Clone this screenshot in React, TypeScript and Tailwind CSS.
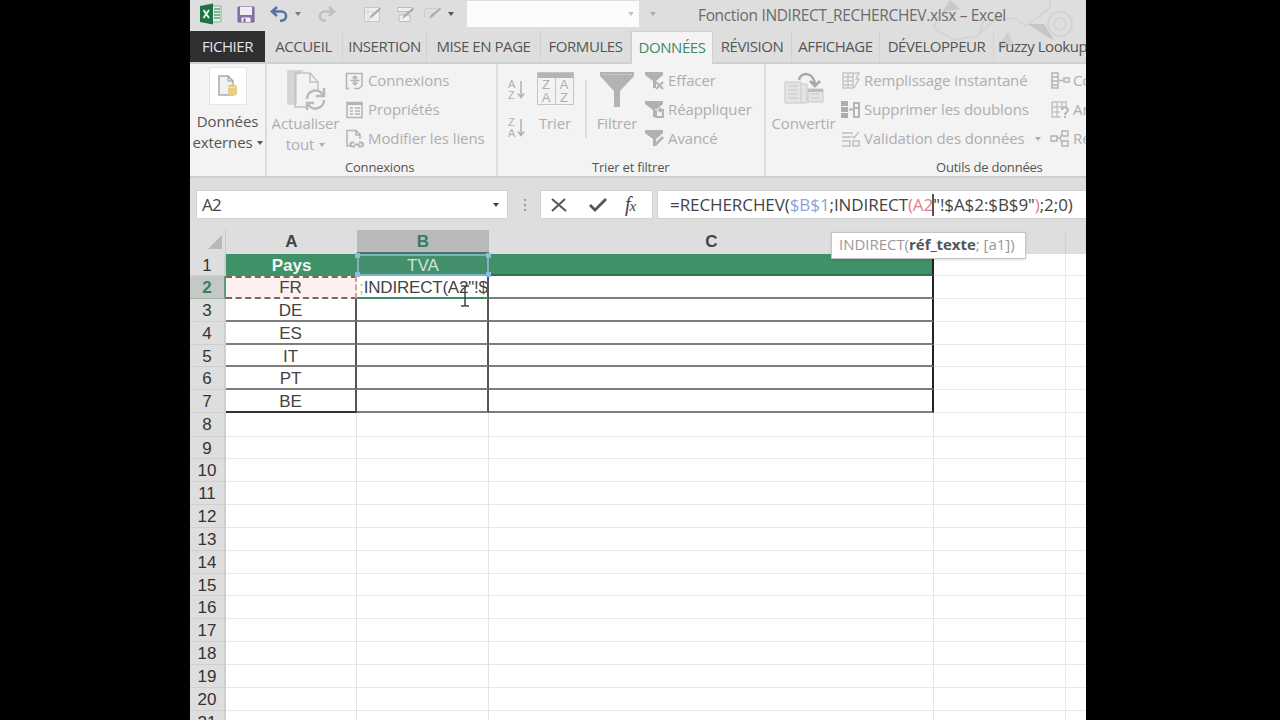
import type { ReactNode } from 'react';
import { clsx } from 'clsx';

interface Tab {
  label: string;
  className: string;
}

const tabs: Tab[] = [
  { label: 'ACCUEIL', className: 'w-[78px]' },
  { label: 'INSERTION', className: 'w-[84px]' },
  { label: 'MISE EN PAGE', className: 'w-[114px]' },
  { label: 'FORMULES', className: 'w-[90px]' },
  { label: 'DONNÉES', className: 'w-[82px]' },
  { label: 'RÉVISION', className: 'w-[79px]' },
  { label: 'AFFICHAGE', className: 'w-[88px]' },
  { label: 'DÉVELOPPEUR', className: 'w-[114px]' },
];

const countries = ['FR', 'DE', 'ES', 'IT', 'PT', 'BE'];

// Heights of the 21 visible rows, the zoom level makes them uneven
const rowHeights = [
  'h-[22px]', 'h-[23px]', 'h-[23px]', 'h-[23px]', 'h-[22px]', 'h-[23px]', 'h-[23px]',
  'h-[24px]', 'h-[22px]', 'h-[23px]', 'h-[23px]', 'h-[23px]', 'h-[23px]', 'h-[23px]',
  'h-[22px]', 'h-[23px]', 'h-[23px]', 'h-[23px]', 'h-[23px]', 'h-[23px]', 'h-[23px]',
];

function Caret({ className }: { className?: string }) {
  return (
    <svg viewBox="0 0 6 4" className={clsx('w-[6px] h-[4px] shrink-0', className)} fill="currentColor">
      <path d="M0 0h6L3 4z" />
    </svg>
  );
}

function ExcelIcon() {
  return (
    <svg width="22" height="22" viewBox="0 0 22 22">
      <path d="M12 3h9v16h-9z" fill="#e4efe8" stroke="#7fb496" />
      <path d="M14 6h6M14 9h6M14 12h6M14 15h6" stroke="#5d9e7b" strokeWidth="1.500" />
      <path d="M0 3l13-2.500v21L0 19z" fill="#1f7246" />
      <path d="M3.500 7l5.500 8M9 7l-5.500 8" stroke="#e8f3ec" strokeWidth="1.900" />
    </svg>
  );
}

function SaveIcon() {
  return (
    <svg width="18" height="17" viewBox="0 0 18 17">
      <path d="M1 1h16v15H1z" fill="#8b6fa5" stroke="#7d6196" />
      <path d="M3 1h12v8H3z" fill="#f1edf4" />
      <path d="M4.500 11.500h9V16h-9z" fill="#f1edf4" />
      <path d="M6.500 12.500h2V16h-2z" fill="#7d6196" />
    </svg>
  );
}

function UndoIcon({ redo }: { redo?: boolean }) {
  return (
    <svg width="19" height="16" viewBox="0 0 19 16" fill="none" stroke={redo ? '#b9b9b9' : '#5573a5'} strokeWidth="2.600" className={redo ? '-scale-x-100' : ''}>
      <path d="M7 1L2 5.500 7 10M2 5.500h9.500a4.600 4.600 0 0 1 0 9.200H10" />
    </svg>
  );
}

function EditTableIcon({ variant }: { variant: number }) {
  return (
    <svg width="19" height="18" viewBox="0 0 19 18" fill="none">
      {variant === 0 && <path d="M1.500 2.500h15v14h-15z" fill="#efefef" stroke="#c6c6c6" />}
      {variant === 0 && <path d="M5 3v13M2 7h14" stroke="#d6d6d6" />}
      {variant === 1 && <path d="M1.500 2.500h15v4h-15zM3 10h11v6.500H3z" fill="#efefef" stroke="#bcbcbc" />}
      {variant === 2 && <path d="M1.500 12V3.500h12" stroke="#c6c6c6" strokeDasharray="2 1" />}
      <path d="M6 14l2-4 9-7.500 1 1.500-8 7.500z" fill="#ababab" />
    </svg>
  );
}

function TitleBar() {
  return (
    <div className="flex h-[31px] shrink-0 items-center pb-[3px]">
      <div className="ml-[10px] w-[37px]"><ExcelIcon /></div>
      <div className="w-[33px]"><SaveIcon /></div>
      <div className="flex w-[47px] items-center gap-[6px] text-[#777]">
        <UndoIcon />
        <Caret />
      </div>
      <div className="w-[46px] opacity-80"><UndoIcon redo /></div>
      <div className="w-[33px]"><EditTableIcon variant={0} /></div>
      <div className="w-[27px]"><EditTableIcon variant={1} /></div>
      <div className="flex w-[44px] items-center gap-[6px] text-[#555]">
        <EditTableIcon variant={2} />
        <Caret />
      </div>
      <div className="flex h-[26px] w-[172px] items-center justify-end bg-[#fcfcfc] pr-[5px] text-[#c4c4c4]">
        <Caret />
      </div>
      <Caret className="ml-[11px] text-[#aaa]" />
      <span className="ml-[42px] mt-[3px] whitespace-nowrap text-[15.500px] tracking-[-0.350px] text-[#6b6b6b]">
        Fonction INDIRECT_RECHERCHEV.xlsx – Excel
      </span>
    </div>
  );
}

function TabBar() {
  return (
    <div className="flex h-[33px] shrink-0 border-b-2 border-[#d0d0d0] text-[15px] tracking-[-0.450px] text-[#555]">
      <div className="flex h-[31px] w-[75px] shrink-0 items-center justify-center bg-[#303030] text-[#e6e6e6]">FICHIER</div>
      {tabs.map(tab => (
        <div
          key={tab.label}
          className={clsx(
            'flex shrink-0 items-center justify-center whitespace-nowrap',
            tab.className,
            tab.label === 'DONNÉES' ? 'h-[33px] border-x border-t border-[#cfcfcf] bg-[#f4f4f4] pb-[2px] text-[#3f8a68]' : 'border-r border-[#d2d2d2]'
          )}
        >
          {tab.label}
        </div>
      ))}
      <div className="flex items-center whitespace-nowrap pl-[4px]">Fuzzy Lookup</div>
    </div>
  );
}

function SmallIcon({ children }: { children: ReactNode }) {
  return (
    <svg width="20" height="20" viewBox="0 0 20 20" fill="none" stroke="#b4b4b4" strokeWidth="1.500" className="shrink-0">
      {children}
    </svg>
  );
}

function Command({ icon, label, caret }: { icon: ReactNode; label: string; caret?: boolean }) {
  return (
    <div className="flex h-[29px] shrink-0 items-center gap-[3px] whitespace-nowrap">
      <SmallIcon>{icon}</SmallIcon>
      <span>{label}</span>
      {caret && <Caret className="ml-[7px]" />}
    </div>
  );
}

function GroupTitle({ children, className }: { children: ReactNode; className?: string }) {
  return (
    <div className={clsx('h-[16px] shrink-0 whitespace-nowrap text-[13px] leading-[16px] tracking-[-0.200px] text-[#555]', className)}>{children}</div>
  );
}

function SortIcon({ first, second }: { first: string; second: string }) {
  return (
    <div className="flex h-[24px] items-center text-[#b0b0b0]">
      <div className="flex w-[9px] flex-col font-['Liberation_Sans',sans-serif] text-[11px] leading-[11px]">
        <span>{first}</span>
        <span>{second}</span>
      </div>
      <svg width="8" height="20" viewBox="0 0 8 20" fill="none" stroke="currentColor" strokeWidth="1.500">
        <path d="M4 1v16M1 13.500l3 4 3-4" />
      </svg>
    </div>
  );
}

const funnel = <path d="M0 1h18v3l-7 6v7H8v-7L0 4z" fill="#b0b0b0" stroke="none" />;

function Ribbon() {
  return (
    <div className="flex h-[112px] shrink-0 overflow-hidden bg-[#f3f3f3] text-[15px] tracking-[-0.100px] text-[#aeaeae]">
      <div className="flex w-[75px] shrink-0 flex-col items-center text-[#555]">
        <div className="mt-[3px] flex h-[38px] w-[38px] items-center justify-center border border-[#e6e6e6] bg-white">
          <svg width="22" height="24" viewBox="0 0 22 24" fill="none">
            <path d="M2 2h9l5 5v14H2z" fill="#f0f1f3" stroke="#aaa" strokeWidth="1.500" />
            <path d="M11 2v5h5" stroke="#999" />
            <path d="M11 12c0-2 9-2 9 0v8c0 2-9 2-9 0z" fill="#e6cd84" />
            <path d="M11 12.500c0 1.500 9 1.500 9 0" stroke="#f5e7bd" />
          </svg>
        </div>
        <span className="mt-[6px] leading-[21px]">Données</span>
        <span className="flex items-center gap-[4px] leading-[21px]">externes <Caret /></span>
      </div>
      <div className="flex w-[233px] shrink-0 border-x-2 border-[#dcdcdc]">
        <div className="flex w-[77px] flex-col items-center">
          <svg width="40" height="43" viewBox="0 0 40 43" fill="none" stroke="#c2c2c2" strokeWidth="1.500" className="mt-[4px]">
            <path d="M2 3h14l-6 4v29H2z" fill="#d6d6d6" stroke="#d0d0d0" />
            <path d="M9 5h15l8 9v8M24 5v9h8M9 5v34h11" />
            <path d="M21 31a8.500 8.500 0 0 1 16-4M38 20v8h-8M38 32a8.500 8.500 0 0 1-16 4M21 42v-7h7" strokeWidth="2.500" stroke="#b9b9b9" />
          </svg>
          <span className="mt-[2px] leading-[21px]">Actualiser</span>
          <span className="flex items-center gap-[5px] leading-[21px]">tout <Caret /></span>
        </div>
        <div className="flex flex-col pl-[1px] pt-[2px]">
          <Command
            label="Connexions"
            icon={<path d="M4 17.500H1.500v-15H17v12l-3 3H9M10 5v9M5.500 9.500h9M10 5L7.500 7.500M10 5l2.500 2.500M7.500 11.500L10 14l2.500-2.500" />}
          />
          <Command label="Propriétés" icon={<><path d="M2 2.500h15v15H2zM5 8h3M10 8h5M5 11h3M10 11h5M5 14h3M10 14h5" /><path d="M2 3.500h15" strokeWidth="3" /></>} />
          <Command label="Modifier les liens" icon={<><path d="M6 17H2V1.500h9l4 4V10M11 2v4h4" /><path d="M9 13.500H7.500a2 2 0 0 0 0 4H10M14 13.500h2a2 2 0 0 1 0 4h-3M9.500 15.500h5" strokeWidth="2" /></>} />
          <GroupTitle className="mt-[6px]">Connexions</GroupTitle>
        </div>
      </div>
      <div className="flex w-[268px] shrink-0 flex-col border-r-2 border-[#dcdcdc]">
        <div className="flex h-[89px] shrink-0 pt-[2px]">
          <div className="ml-[10px] flex w-[28px] flex-col gap-[14px] pt-[12px]">
            <SortIcon first="A" second="Z" />
            <SortIcon first="Z" second="A" />
          </div>
          <div className="flex w-[38px] flex-col items-center">
            <div className="mt-[6px] flex h-[33px] w-[37px] flex-col border border-[#c4c4c4]">
              <div className="h-[5px] shrink-0 bg-[#b4b4b4]" />
              <div className="flex flex-1 text-center font-['Liberation_Sans',sans-serif] text-[13px] leading-[13px]">
                <div className="flex flex-1 flex-col border-r border-[#c4c4c4]"><span>Z</span><span>A</span></div>
                <div className="flex flex-1 flex-col"><span>A</span><span>Z</span></div>
              </div>
            </div>
            <span className="mt-[8px] leading-[21px]">Trier</span>
          </div>
          <div className="ml-[11px] mt-[14px] h-[58px] w-[2px] bg-[#dcdcdc]" />
          <div className="ml-[5px] flex w-[50px] flex-col items-center">
            <svg width="34" height="35" viewBox="0 0 34 35" className="mt-[6px]">
              <path d="M0 0h34v4L20 19v16h-6V19L0 4z" fill="#b3b3b3" />
              <path d="M2 2.500h30" stroke="#c6c6c6" />
            </svg>
            <span className="mt-[6px] leading-[21px]">Filtrer</span>
          </div>
          <div className="ml-[3px] flex flex-col">
            <Command label="Effacer" icon={<>{funnel}<path d="M11 11l7 7M18 11l-7 7" strokeWidth="2" /></>} />
            <Command label="Réappliquer" icon={<>{funnel}<path d="M10 9h9v9h-9z" fill="#f3f3f3" stroke="none" /><path d="M11 10v7h7v-7h-4M16 8l-2 2 2 2" strokeWidth="2" /></>} />
            <Command label="Avancé" icon={<>{funnel}<path d="M10 16l8-8" strokeWidth="3" /></>} />
          </div>
        </div>
        <GroupTitle className="mt-[6px] pl-[94px]">Trier et filtrer</GroupTitle>
      </div>
      <div className="flex w-[520px] shrink-0 flex-col">
        <div className="flex h-[89px] shrink-0 pt-[2px]">
          <div className="flex w-[75px] flex-col items-center">
            <svg width="40" height="36" viewBox="0 0 40 36" fill="none" stroke="#c8c8c8" className="mt-[5px]">
              <path d="M1 11h16v21H1zM17 13h6v19h-6M24 18h15v13H24z" fill="#e4e4e4" />
              <path d="M4 15h10M4 19h10M4 23h10M4 27h10M27 23h9M27 27h9" />
              <path d="M24 18h15v3H24z" fill="#bcbcbc" stroke="none" />
              <path d="M15 9c1-8 14-9 16 4M26 10l5 5 5-5" stroke="#a8a8a8" strokeWidth="2.500" />
            </svg>
            <span className="mt-[6px] leading-[21px]">Convertir</span>
          </div>
          <div className="flex w-[209px] flex-col">
            <Command label="Remplissage instantané" icon={<path d="M2 2h5v15H2zM7 2h5v15H7zM2 6h10M2 10h10M2 14h10M12 2h6l-3 6h3l-5 9" stroke="#c6c6c6" />} />
            <Command label="Supprimer les doublons" icon={<><path d="M0 1h7v5H0zM0 7h7v5H0zM0 13h7v5H0z" fill="#adadad" stroke="none" /><path d="M8 9.500h4M13 3h5v14h-5zM13 8h5" strokeWidth="2" /></>} />
            <Command label="Validation des données" caret icon={<path d="M1 4h11M1 8h9M1 12h8v5H1M11 7l2 2 5-6M12 12h6v5h-6z" stroke="#c0c0c0" />} />
          </div>
          <div className="flex flex-col">
            <Command label="Consolider" icon={<path d="M2 2h6v15H2zM2 6h6M2 10h6M2 14h6M9 9.500h4M14 7h5v4h-5z" />} />
            <Command label="Analyse scénarios" icon={<><path d="M2 2h14v6M2 2v15h9M2 7h11M2 12h8M7 2v15M12 2v7" stroke="#c4c4c4" /><path d="M12 10c0-4 6-3 6 0 0 2-3 2-3 5M15 16v2" strokeWidth="2" /></>} />
            <Command label="Relations" icon={<path d="M1 7h6v5H1zM12 2h6v5h-6zM12 12h6v5h-6zM7 9h3l2-4M10 9l2 5" />} />
          </div>
        </div>
        <GroupTitle className="mt-[6px] pl-[170px]">Outils de données</GroupTitle>
      </div>
    </div>
  );
}

function FormulaBar() {
  return (
    <div className="flex h-[54px] shrink-0 border-t-2 border-[#cecece] pt-[12px] text-[17px] text-[#444]">
      <div className="ml-[6px] flex h-[29px] w-[312px] shrink-0 items-center justify-between border border-[#d2d2d2] bg-white pl-[5px] pr-[8px]">
        <span className="tracking-[-0.700px]">A2</span>
        <Caret />
      </div>
      <div className="ml-[15px] flex h-[29px] w-[3px] shrink-0 flex-col items-center justify-center gap-[3px]">
        <i className="h-[2px] w-[2px] bg-[#999]" />
        <i className="h-[2px] w-[2px] bg-[#999]" />
        <i className="h-[2px] w-[2px] bg-[#999]" />
      </div>
      <div className="ml-[14px] flex h-[29px] w-[113px] shrink-0 items-center border border-[#d2d2d2] bg-white">
        <svg width="16" height="14" viewBox="0 0 16 14" fill="none" stroke="#555" strokeWidth="2" className="ml-[10px]">
          <path d="M1 1l14 12M14 1L1 13" />
        </svg>
        <svg width="18" height="14" viewBox="0 0 18 14" fill="none" stroke="#555" strokeWidth="2.800" className="ml-[22px]">
          <path d="M1 7l5 5L17 1" />
        </svg>
        <span className="ml-[18px] font-['Liberation_Serif',serif] text-[20px] italic leading-[20px] tracking-[-1px]">f<span className="text-[15px]">x</span></span>
      </div>
      <div className="ml-[4px] flex h-[29px] flex-1 items-center whitespace-pre border border-r-0 border-[#d2d2d2] bg-white pl-[12px] tracking-[-0.080px]">
        <span>=RECHERCHEV(</span>
        <span className="text-[#8ba3dc]">$B$1</span>
        <span>;INDIRECT</span>
        <span className="text-[#e0808f]">(A2</span>
        <span className="-mx-px h-[22px] w-[2px] bg-[#555]" />
        <span>"!$A$2:$B$9"</span>
        <span className="text-[#e0808f]">)</span>
        <span>;2;0)</span>
      </div>
    </div>
  );
}

function ColumnHeaders() {
  return (
    <div className="flex h-[24px] shrink-0 font-['Liberation_Sans',sans-serif] text-[17px] leading-[24px] text-[#444]">
      <div className="flex w-[36px] justify-end border-r border-[#c8c8c8] pr-[3px] pt-[5px]">
        <svg width="14" height="14" viewBox="0 0 14 14"><path d="M14 0v14H0z" fill="#b8b8b8" /></svg>
      </div>
      <div className="w-[131px] text-center font-bold">A</div>
      <div className="w-[132px] border-b-2 border-[#3c7c5c] bg-[#bababa] text-center font-bold text-[#3c7c5c]">B</div>
      <div className="w-[445px] text-center font-bold">C</div>
      <div className="w-[132px] border-r border-[#d0d0d0]" />
    </div>
  );
}

function SheetRow({ index }: { index: number }) {
  const header = index === 0;
  const inTable = index < 7;
  const active = index === 1;
  const last = index === 6;
  const line = inTable ? 'border-b-2 border-b-[#7d7d7d]' : 'border-b border-b-[#e9e9e9]';

  return (
    <div className={clsx('flex shrink-0 text-[17px] leading-[23px] text-[#444]', rowHeights[index])}>
      <div
        className={clsx(
          'w-[36px] shrink-0 border-b border-r-2 text-center',
          active ? 'border-[#9dbcac] border-r-[#5f9a7c] bg-[#c4c8c6] font-bold text-[#3c7c5c]' : 'border-[#cfcfcf] bg-[#dedede] text-[#333]'
        )}
      >
        {index + 1}
      </div>
      {header ? (
        <>
          <div className="w-[131px] bg-[#3f9168] text-center font-bold text-[#eef6f1]">Pays</div>
          <div className="relative w-[132px] border-2 border-[#7fb3c4] bg-[#45906c] text-center leading-[20px] text-[#cde5d8]">
            TVA
            <i className="absolute -left-[4px] -top-[3px] size-[5px] bg-[#8fbbe0]" />
            <i className="absolute -right-[4px] -top-[3px] size-[5px] bg-[#8fbbe0]" />
            <i className="absolute -bottom-[3px] -left-[4px] size-[5px] bg-[#8fbbe0]" />
            <i className="absolute -bottom-[3px] -right-[4px] size-[5px] bg-[#8fbbe0]" />
          </div>
          <div className="w-[445px] border-b-2 border-r-2 border-[#2f7350] border-r-[#222] bg-[#3f9168]" />
        </>
      ) : (
        <>
          <div
            className={clsx(
              'w-[131px] text-center',
              active && 'border-y-2 border-r-2 border-dashed border-y-[#76695d] border-r-[#e39a9a] bg-[#fdf0ee] leading-[20px]',
              !active && inTable && 'border-r-2 border-r-[#555]',
              !active && !inTable && 'border-r border-r-[#e4e4e4]',
              !active && line,
              last && 'border-b-[#333]'
            )}
          >
            {inTable && countries[index - 1]}
          </div>
          <div
            className={clsx(
              'w-[132px] overflow-hidden whitespace-pre',
              active ? 'border-b-2 border-b-[#3f8a68] pl-[2px]' : line,
              inTable ? 'border-r-2 border-r-[#555]' : 'border-r border-r-[#e4e4e4]'
            )}
          >
            {active && <><span className="text-[#b5b5b5]">;</span><span className="tracking-[-0.200px]">INDIRECT(A2"!$A$2</span></>}
          </div>
          <div className={clsx('w-[445px]', line, inTable ? 'border-r-2 border-r-[#222]' : 'border-r border-r-[#e4e4e4]')} />
        </>
      )}
      <div className="w-[132px] border-b border-r border-[#e9e9e9]" />
      <div className="w-[20px] border-b border-[#e9e9e9]" />
    </div>
  );
}

export default function App() {
  return (
    <div className="flex h-[720px] w-[1280px] justify-center overflow-hidden bg-black pr-[4px] font-['Open_Sans','Noto_Sans',sans-serif]">
      <div className="relative isolate flex h-[720px] w-[896px] flex-col overflow-hidden bg-[#dedede]">
        {/* Circuit pattern behind the title and the tabs */}
        <svg className="absolute right-0 top-0 -z-10 h-[62px] w-[200px]" viewBox="0 0 200 62" fill="none" stroke="#d4d4d4" strokeWidth="2">
          <path d="M52 16l-4 12 20 12 24-4 6-16" />
          <path d="M94 34l14-14 20-2 12 8 24-18V0" />
          <path d="M64 0l10 9-18 3z" fill="#c9c9c9" stroke="none" />
          <path d="M142 24h16l10 16-8-4z" fill="#c6c6c6" stroke="none" />
          <path d="M112 46l10-14 6 14z" fill="#cecece" stroke="none" />
          <circle cx="174" cy="24" r="12" />
          <circle cx="174" cy="24" r="6" />
        </svg>

        <TitleBar />
        <TabBar />
        <Ribbon />
        <FormulaBar />
        <ColumnHeaders />
        <div className="flex shrink-0 flex-col bg-white font-['Liberation_Sans',Arial,sans-serif]">
          {rowHeights.map((_, i) => (
            <SheetRow key={i} index={i} />
          ))}
        </div>

        {/* Function hint under the formula bar */}
        <div className="absolute left-[641px] top-[232px] flex h-[27px] w-[195px] items-center whitespace-pre border border-[#c4c4c4] bg-white pb-[2px] pl-[7px] text-[15px] tracking-[-0.030px] text-[#999] shadow-sm">
          INDIRECT(<b className="text-[#555]">réf_texte</b>; [a1])
        </div>

        {/* Mouse pointer */}
        <svg className="absolute left-[270px] top-[285px]" width="10" height="22" viewBox="0 0 10 22" fill="none" stroke="#444" strokeWidth="1.500">
          <path d="M1 1h3l1 1 1-1h3M5 2v18M1 21h3l1-1 1 1h3" />
        </svg>
      </div>
    </div>
  );
}
